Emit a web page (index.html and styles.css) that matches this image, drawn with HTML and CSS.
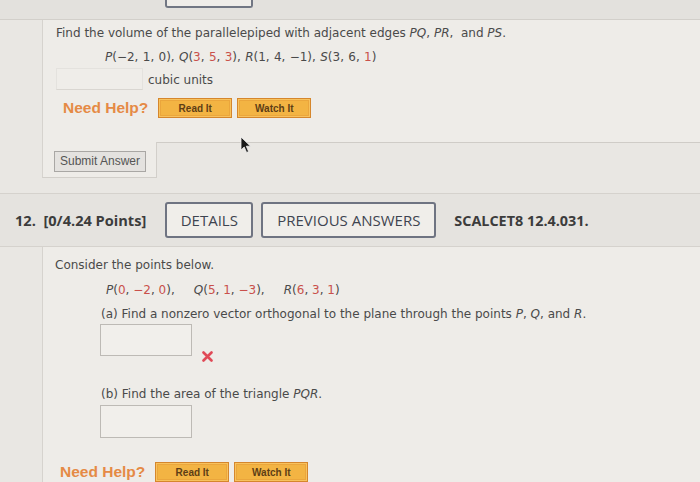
FILE: index.html
```html
<!DOCTYPE html>
<html>
<head>
<meta charset="utf-8">
<link rel="stylesheet" href="styles.css">
</head>
<body>
<div class="topstrip"><div class="prevbtn"></div></div>

<div class="q11">
  <div class="q11-body">
    <p class="line">Find the volume of the parallelepiped with adjacent edges <i>PQ</i>, <i>PR</i>,&nbsp; and <i>PS</i>.</p>
    <p class="line pts"><i>P</i>(−2, 1, 0), <i>Q</i>(<span class="r">3</span>, <span class="r">5</span>, <span class="r">3</span>), <i>R</i>(1, 4, −1), <i>S</i>(3, 6, <span class="r">1</span>)</p>
    <div class="ansrow"><span class="blank"></span><span class="units">cubic units</span></div>
    <div class="help">
      <span class="needhelp">Need Help?</span>
      <button class="hbtn">Read It</button>
      <button class="hbtn">Watch It</button>
    </div>
  </div>
  <div class="q11-foot">
    <div class="submit-tab"><button class="submit">Submit Answer</button></div>
    <div class="foot-rest"></div>
  </div>
</div>

<div class="qhead">
  <span class="qnum">12.&nbsp; [0/4.24 Points]</span>
  <button class="tab details">DETAILS</button>
  <button class="tab prev">PREVIOUS ANSWERS</button>
  <span class="qid">SCALCET8 12.4.031.</span>
</div>

<div class="q12">
  <p class="line c1">Consider the points below.</p>
  <p class="line pts2"><i>P</i>(<span class="r">0</span>, <span class="r">−2</span>, <span class="r">0</span>),&nbsp;&nbsp;&nbsp;&nbsp; <i>Q</i>(<span class="r">5</span>, <span class="r">1</span>, <span class="r">−3</span>),&nbsp;&nbsp;&nbsp;&nbsp; <i>R</i>(<span class="r">6</span>, <span class="r">3</span>, <span class="r">1</span>)</p>
  <p class="line part">(a) Find a nonzero vector orthogonal to the plane through the points <i>P</i>, <i>Q</i>, and <i>R</i>.</p>
  <div class="boxrow">
    <span class="box"></span>
    <svg class="wrong" width="11" height="11" viewBox="0 0 11 11"><path d="M1.5 1.5 L9.5 9.5 M9.5 1.5 L1.5 9.5" stroke="#e04a57" stroke-width="2.6" stroke-linecap="round"/></svg>
  </div>
  <p class="line part partb">(b) Find the area of the triangle <i>PQR</i>.</p>
  <div class="boxrow"><span class="box box2"></span></div>
  <div class="help help2">
    <span class="needhelp">Need Help?</span>
    <button class="hbtn">Read It</button>
    <button class="hbtn">Watch It</button>
  </div>
</div>

<svg class="cursor" width="12" height="18" viewBox="0 0 12 18"><path d="M1 1 L1 14 L4.2 11 L6.6 16.5 L8.6 15.6 L6.3 10.2 L10.5 10.2 Z" fill="#1a1a1a" stroke="#f2f2f2" stroke-width="0.8"/></svg>
</body>
</html>
```

FILE: styles.css
```css
html, body {
  margin: 0;
  padding: 0;
}
body {
  width: 700px;
  height: 482px;
  overflow: hidden;
  background: #e9e7e3;
  font-family: "DejaVu Sans", Verdana, sans-serif;
  color: #4a4a4a;
  position: relative;
}
.topstrip {
  height: 19px;
  background: #e3e1dd;
  border-bottom: 1px solid #d2cfca;
  display: flex;
}
.prevbtn {
  margin-left: 165px;
  width: 84px;
  height: 6px;
  border: 2px solid #717683;
  border-top: none;
  border-radius: 0 0 3px 3px;
  background: #efede9;
}
.q11 {
  margin-left: 42px;
}
.q11-body {
  background: #eeece8;
  border-left: 1px solid #d6d3ce;
  padding: 4px 0 0 13px;
  height: 118px;
}
.line {
  margin: 0;
  font-size: 12px;
  line-height: 18px;
  white-space: nowrap;
}
.line i {
  font-style: italic;
}
.r {
  color: #c9504b;
}
.pts {
  margin-top: 6px;
  padding-left: 49px;
  word-spacing: 0.5px;
}
.ansrow {
  display: flex;
  align-items: center;
  margin-top: 2px;
  height: 22px;
}
.blank {
  width: 85px;
  height: 20px;
  border: 1px solid #e4e2de;
  border-bottom-color: #d9d6d1;
  background: #efede9;
}
.units {
  font-size: 12px;
  margin-left: 5px;
  margin-top: 2px;
}
.help {
  display: flex;
  align-items: center;
  margin-top: 7px;
  padding-left: 7px;
  height: 22px;
}
.needhelp {
  font-family: "Liberation Sans", Arial, sans-serif;
  font-weight: bold;
  font-size: 15.5px;
  color: #e58a45;
  margin-right: 10px;
}
.hbtn {
  width: 74px;
  height: 20px;
  margin: 0 5px 0 0;
  padding: 0;
  border: 1px solid #d5862c;
  box-shadow: inset 0 0 0 1px #f7c25e, inset 0 0 0 2px #eba63c;
  background: #f3b443;
  font-family: "Liberation Sans", Arial, sans-serif;
  font-weight: bold;
  font-size: 10px;
  color: #5e3e16;
}
.q11-foot {
  display: flex;
  height: 36px;
}
.submit-tab {
  width: 115px;
  background: #eeece8;
  border-left: 1px solid #d6d3ce;
  border-right: 1px solid #d2cfca;
  border-bottom: 1px solid #d2cfca;
  padding: 8px 0 0 11px;
  box-sizing: border-box;
}
.submit {
  width: 92px;
  height: 21px;
  padding: 0;
  border: 1px solid #a9a7a4;
  background: #e4e2df;
  font-family: "Liberation Sans", Arial, sans-serif;
  font-size: 12px;
  color: #555;
}
.foot-rest {
  flex: 1;
  border-top: 1px solid #cfccc7;
}
.qhead {
  margin-top: 15px;
  height: 52px;
  background: #e5e3df;
  border-top: 1px solid #d5d2cd;
  border-bottom: 1px solid #d5d2cd;
  display: flex;
  align-items: center;
  padding-left: 15px;
  font-family: "Open Sans", sans-serif;
  color: #3c3c3c;
}
.qnum {
  font-weight: bold;
  font-size: 14.6px;
}
.tab {
  height: 36px;
  padding: 0;
  border: 2px solid #6f7482;
  border-radius: 3px;
  background: #f0eeea;
  font-family: "Open Sans", sans-serif;
  font-size: 15px;
  color: #3e4450;
}
.details {
  width: 88px;
  margin-left: 19px;
}
.prev {
  width: 175px;
  margin-left: 8px;
}
.qid {
  font-weight: bold;
  font-size: 14.4px;
  margin-left: 18px;
}
.q12 {
  margin-left: 42px;
  background: #eeece8;
  border-left: 1px solid #d6d3ce;
  padding: 9px 0 0 12px;
  height: 226px;
  overflow: hidden;
}
.pts2 {
  margin-top: 7px;
  padding-left: 51px;
}
.part {
  margin-top: 6px;
  padding-left: 46px;
}
.boxrow {
  display: flex;
  align-items: flex-end;
  padding-left: 45px;
  margin-top: 1px;
}
.box {
  width: 90px;
  height: 30px;
  border: 1px solid #bdbab5;
  background: #f1efeb;
}
.box2 {
  height: 31px;
  margin-top: 1px;
}
.wrong {
  margin-left: 10px;
  margin-bottom: -6px;
}
.partb {
  margin-top: 29px;
}
.help2 {
  margin-top: 23px;
  padding-left: 5px;
}
.cursor {
  position: absolute;
  left: 240px;
  top: 136px;
}
```
